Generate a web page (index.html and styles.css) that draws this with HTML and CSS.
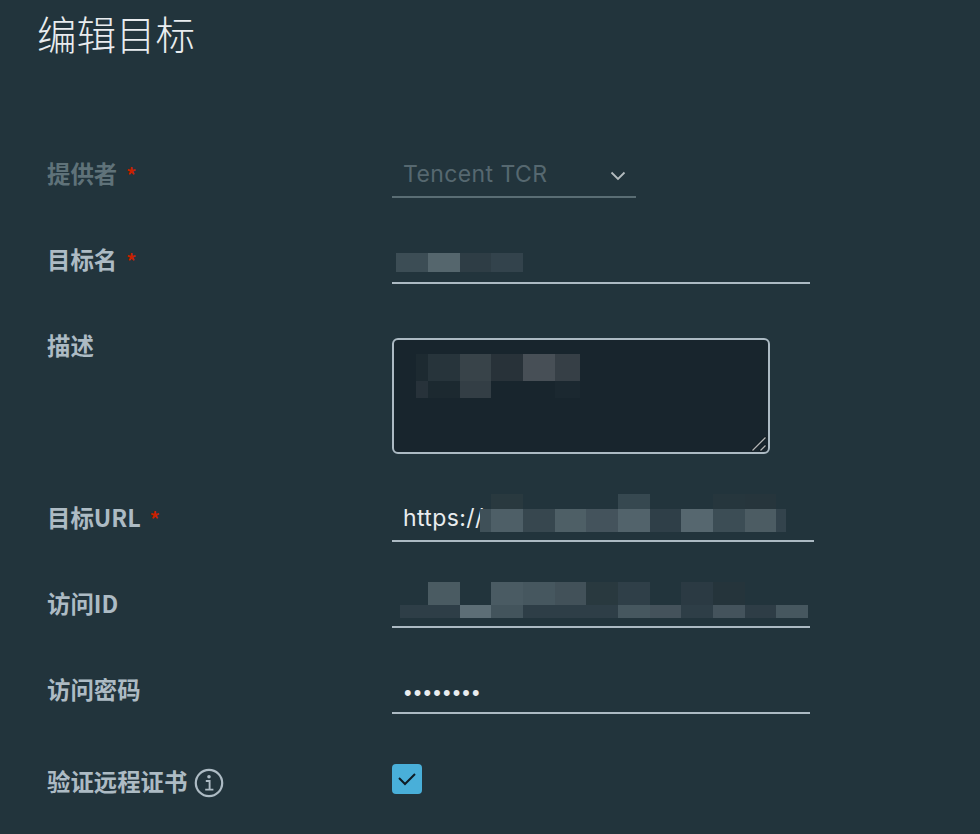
FILE: index.html
```html
<!DOCTYPE html>
<html lang="zh-CN">
<head>
<meta charset="utf-8">
<title>编辑目标</title>
<link rel="stylesheet" href="styles.css">
</head>
<body>
<h1 class="title">编辑目标</h1>
<form class="form">
  <div class="row">
    <label class="label label-disabled">提供者<span class="req">*</span></label>
    <div class="field field-select">
      <span class="value value-disabled">Tencent TCR</span>
      <svg class="chevron" width="16" height="10" viewBox="0 0 16 10"><path d="M1.5 1.5 8 8l6.5-6.5" fill="none" stroke="#b4bcbf" stroke-width="1.8"/></svg>
    </div>
  </div>
  <div class="row">
    <label class="label">目标名<span class="req">*</span></label>
    <div class="field field-name">
      <svg class="mosaic" width="418" height="42" viewBox="392 240 418 42" shape-rendering="crispEdges">
        <rect x="396" y="253" width="32" height="19" fill="#3c4d55"/><rect x="428" y="253" width="32" height="19" fill="#55666d"/><rect x="460" y="253" width="31" height="19" fill="#2e3d45"/><rect x="491" y="253" width="32" height="19" fill="#33434c"/>
      </svg>
    </div>
  </div>
  <div class="row row-area">
    <label class="label">描述</label>
    <div class="area-wrap">
      <textarea class="area"></textarea>
      <svg class="mosaic" width="378" height="116" viewBox="392 338 378 116" shape-rendering="crispEdges">
        <rect x="416" y="354" width="12" height="27" fill="#1d2a31"/><rect x="428" y="354" width="32" height="27" fill="#27343b"/><rect x="460" y="354" width="31" height="27" fill="#384349"/><rect x="491" y="354" width="32" height="27" fill="#283239"/><rect x="523" y="354" width="32" height="27" fill="#474f56"/><rect x="555" y="354" width="25" height="27" fill="#363f46"/>
        <rect x="416" y="381" width="12" height="17" fill="#27323a"/><rect x="428" y="381" width="32" height="17" fill="#1c2930"/><rect x="460" y="381" width="31" height="17" fill="#333e45"/><rect x="555" y="381" width="25" height="17" fill="#1b2830"/>
      </svg>
      <svg class="grip" width="16" height="16" viewBox="0 0 16 16"><path d="M1 15 15 1M9 15l6-6" fill="none" stroke="#0c1418" stroke-width="2.4"/><path d="M1.5 14.5 14.5 1.5M9.5 14.5l5-5" fill="none" stroke="#b0b4b6" stroke-width="1.3"/></svg>
    </div>
  </div>
  <div class="row">
    <label class="label">目标URL<span class="req">*</span></label>
    <div class="field field-url">
      <span class="value">https://</span>
      <svg class="mosaic" width="422" height="42" viewBox="392 498 422 42" shape-rendering="crispEdges">
        <rect x="491" y="494" width="32" height="15" fill="#29393f"/><rect x="618" y="494" width="32" height="15" fill="#364850"/><rect x="713" y="494" width="32" height="15" fill="#26363d"/><rect x="745" y="494" width="31" height="15" fill="#26353c"/>
        <rect x="480" y="509" width="11" height="23" fill="#3f5058"/><rect x="491" y="509" width="32" height="23" fill="#4e5f67"/><rect x="523" y="509" width="32" height="23" fill="#37474f"/><rect x="555" y="509" width="31" height="23" fill="#4e5f66"/><rect x="586" y="509" width="32" height="23" fill="#44535c"/><rect x="618" y="509" width="32" height="23" fill="#52636b"/><rect x="650" y="509" width="31" height="23" fill="#2f3f48"/><rect x="681" y="509" width="32" height="23" fill="#56676f"/><rect x="713" y="509" width="32" height="23" fill="#3c4d55"/><rect x="745" y="509" width="31" height="23" fill="#4c5c63"/><rect x="776" y="509" width="10" height="23" fill="#33434c"/>
      </svg>
    </div>
  </div>
  <div class="row">
    <label class="label">访问ID</label>
    <div class="field field-name">
      <svg class="mosaic" width="418" height="42" viewBox="392 584 418 42" shape-rendering="crispEdges">
        <rect x="428" y="582" width="32" height="23" fill="#4a5b62"/><rect x="491" y="582" width="32" height="23" fill="#4a5b63"/><rect x="523" y="582" width="32" height="23" fill="#46575f"/><rect x="555" y="582" width="31" height="23" fill="#425159"/><rect x="586" y="582" width="32" height="23" fill="#29393f"/><rect x="618" y="582" width="32" height="23" fill="#2f3f48"/><rect x="681" y="582" width="32" height="23" fill="#2b3a43"/><rect x="713" y="582" width="32" height="23" fill="#25343b"/>
        <rect x="400" y="605" width="60" height="13" fill="#2e3e47"/><rect x="460" y="605" width="31" height="13" fill="#5d6e76"/><rect x="491" y="605" width="32" height="13" fill="#43545c"/><rect x="523" y="605" width="95" height="13" fill="#2e3e47"/><rect x="618" y="605" width="32" height="13" fill="#46575f"/><rect x="650" y="605" width="31" height="13" fill="#44525b"/><rect x="681" y="605" width="32" height="13" fill="#2e3e47"/><rect x="713" y="605" width="32" height="13" fill="#44535c"/><rect x="745" y="605" width="31" height="13" fill="#2e3d46"/><rect x="776" y="605" width="32" height="13" fill="#46575f"/>
      </svg>
    </div>
  </div>
  <div class="row">
    <label class="label">访问密码</label>
    <div class="field field-name">
      <span class="value value-dots">••••••••</span>
    </div>
  </div>
  <div class="row row-check">
    <label class="label label-info">验证远程证书
      <svg class="info" width="30" height="30" viewBox="0 0 30 30"><circle cx="15" cy="15" r="13.2" fill="none" stroke="#adbbc4" stroke-width="2.2"/><circle cx="15" cy="8.8" r="1.8" fill="#adbbc4"/><path d="M11.8 13h3.8v8.4M11.2 21.6h8.2" fill="none" stroke="#adbbc4" stroke-width="1.9"/></svg>
    </label>
    <span class="check">
      <svg width="18" height="14" viewBox="0 0 18 14"><path d="M1 6 7 12 17 2" fill="none" stroke="#0f1c24" stroke-width="2"/></svg>
    </span>
  </div>
</form>
</body>
</html>
```

FILE: styles.css
```css
* { box-sizing: border-box; }
html, body { margin: 0; height: 100%; }
body {
  background: #22343c;
  font-family: "Inter", "Noto Sans CJK SC", sans-serif;
  overflow: hidden;
}
.title {
  margin: 0;
  padding: 8px 0 0 37px;
  height: 154px;
  font-family: "Noto Sans CJK SC", sans-serif;
  font-size: 39.5px;
  line-height: 50px;
  font-weight: 300;
  color: #e9ecef;
}
.form {
  display: flex;
  flex-direction: column;
  gap: 42px;
  padding-left: 47px;
}
.row {
  display: grid;
  grid-template-columns: 345px 1fr;
  align-items: start;
}
.label {
  display: block;
  height: 40px;
  margin-top: -1px;
  font-family: "Noto Sans CJK SC", sans-serif;
  font-size: 23.4px;
  line-height: 40px;
  font-weight: 700;
  color: #adbbc4;
}
.label-disabled { color: #5f7279; }
.req {
  margin-left: 9px;
  font-size: 20px;
  font-weight: 700;
  color: #c92100;
}
.field {
  position: relative;
  display: flex;
  align-items: center;
  height: 44px;
  padding: 0 12px 2px 11px;
  border-bottom: 2px solid #acbac3;
}
.field-select {
  width: 244px;
  justify-content: space-between;
  border-bottom-color: #5a6d74;
}
.field-name { width: 418px; }
.field-url { width: 422px; }
.value {
  font-size: 23px;
  line-height: 30px;
  letter-spacing: 0.4px;
  color: #e9ecef;
}
.value-disabled { color: #566870; }
.value-dots {
  padding: 6px 0 0 1px;
  font-family: "Liberation Sans", sans-serif;
  letter-spacing: 2.2px;
  font-size: 21.5px;
}
.chevron { margin: 4px -2px 0 0; }
.mosaic {
  position: absolute;
  left: 0;
  top: 0;
  overflow: visible;
  pointer-events: none;
}
.area-wrap {
  position: relative;
  width: 378px;
  height: 116px;
  margin: 12px 0 2px;
}
.area {
  display: block;
  width: 378px;
  height: 116px;
  margin: 0;
  background: #18252d;
  border: 2px solid #acbac3;
  border-radius: 6px;
  outline: none;
  resize: none;
}
.grip {
  position: absolute;
  right: 3px;
  bottom: 2px;
}
.label-info {
  display: flex;
  align-items: center;
  gap: 7px;
  height: auto;
  margin-top: 5px;
}
.info { margin-top: 3px; }
.check {
  display: flex;
  align-items: center;
  justify-content: center;
  width: 30px;
  height: 30px;
  margin-top: 8px;
  background: #49afd9;
  border-radius: 4px;
}
```
